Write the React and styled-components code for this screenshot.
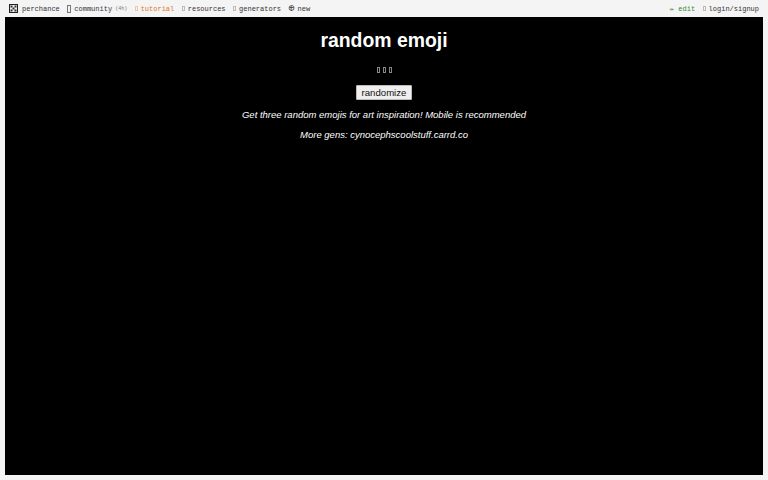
import React from "react"
import styled, { createGlobalStyle } from "styled-components"

const GlobalStyle = createGlobalStyle`
  html, body { margin: 0; padding: 0; height: 100%; background: #f4f4f4; overflow: hidden; }
  #root { height: 100%; }
`

const Page = styled.div`
  display: flex;
  flex-direction: column;
  height: 480px;
`

const TopBar = styled.nav`
  display: flex;
  justify-content: space-between;
  align-items: center;
  height: 17px;
  padding: 0 9px;
  font-family: "Liberation Mono", monospace;
  font-size: 7px;
  color: #333;
`

const NavGroup = styled.div`
  display: flex;
  align-items: center;
  gap: 7.5px;
`

const NavItem = styled.a`
  display: flex;
  align-items: center;
  gap: ${(p) => p.$gap || 3}px;
  color: ${(p) => p.$color || "#333"};
  white-space: nowrap;
`

const Tofu = styled.span`
  display: block;
  box-sizing: border-box;
  width: ${(p) => (p.$tall ? 4 : 3)}px;
  height: ${(p) => (p.$tall ? 8 : 5)}px;
  border: 1px solid ${(p) => (p.$tall ? "#777" : p.$color || "#bbb")};
`

const Small = styled.span`
  font-size: 5px;
  color: #777;
`

const Glyph = styled.span`
  font-size: 10px;
  line-height: 10px;
`

const Frame = styled.main`
  flex: 1;
  margin: 0 5px 5px;
  background: #000;
  color: #fff;
  font-family: "Liberation Sans", Arial, sans-serif;
  text-align: center;
  overflow: hidden;
`

const Title = styled.h1`
  margin: 11px 0 0;
  font-size: 19.4px;
  line-height: 24px;
  font-weight: 700;
`

const Emojis = styled.div`
  display: flex;
  justify-content: center;
  align-items: center;
  gap: 3px;
  margin-top: 14px;
  height: 8px;
`

const EmojiBox = styled.span`
  display: block;
  box-sizing: border-box;
  width: 3px;
  height: 6px;
  border: 1px solid #888;
`

const Randomize = styled.button`
  display: block;
  margin: 11px auto 0;
  width: 56px;
  height: 15px;
  padding: 0;
  border: 1px solid #bbb;
  border-radius: 1px;
  background: #efefef;
  color: #111;
  font-family: "Liberation Sans", Arial, sans-serif;
  font-size: 9.6px;
  line-height: 13px;
`

const Note = styled.p`
  margin: ${(p) => p.$top}px 0 0;
  font-size: 9.5px;
  line-height: 12px;
  font-style: italic;
`

export default function App() {
  return (
    <>
      <GlobalStyle />
      <Page>
        <TopBar>
          <NavGroup>
            <NavItem $gap={4}>
              <svg width="9" height="9" viewBox="0 0 9 9">
                <rect x="0.5" y="0.5" width="8" height="8" fill="#eee" stroke="#222" />
                <rect x="1.5" y="1.5" width="2" height="2" fill="#333" />
                <rect x="5.5" y="1.5" width="2" height="2" fill="#333" />
                <rect x="3.5" y="3.5" width="2" height="2" fill="#333" />
                <rect x="1.5" y="5.5" width="2" height="2" fill="#333" />
                <rect x="5.5" y="5.5" width="2" height="2" fill="#333" />
              </svg>
              perchance
            </NavItem>
            <NavItem>
              <Tofu $tall /> community <Small>(4h)</Small>
            </NavItem>
            <NavItem $color="#e0762a">
              <Tofu $color="#f0c8a8" /> tutorial
            </NavItem>
            <NavItem>
              <Tofu /> resources
            </NavItem>
            <NavItem>
              <Tofu /> generators
            </NavItem>
            <NavItem>
              <Glyph>⊕</Glyph> new
            </NavItem>
          </NavGroup>
          <NavGroup>
            <NavItem $color="#2e8b2e">✏ edit</NavItem>
            <NavItem>
              <Tofu /> login/signup
            </NavItem>
          </NavGroup>
        </TopBar>
        <Frame>
          <Title>random emoji</Title>
          <Emojis>
            <EmojiBox />
            <EmojiBox />
            <EmojiBox />
          </Emojis>
          <Randomize>randomize</Randomize>
          <Note $top={9}>Get three random emojis for art inspiration! Mobile is recommended</Note>
          <Note $top={8}>More gens: cynocephscoolstuff.carrd.co</Note>
        </Frame>
      </Page>
    </>
  )
}
